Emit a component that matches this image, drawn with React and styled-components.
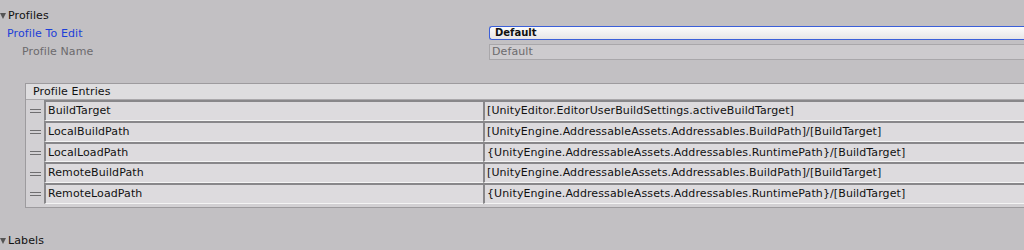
import React from 'react';
import styled, { createGlobalStyle } from 'styled-components';

const GlobalStyle = createGlobalStyle`
  html, body {
    margin: 0;
    padding: 0;
    background: #c2c0c3;
  }
  body {
    font-family: "DejaVu Sans", "Liberation Sans", sans-serif;
    font-size: 11px;
    letter-spacing: 0.1px;
    color: #111;
    overflow: hidden;
  }
`;

const Page = styled.div`
  width: 1024px;
  height: 250px;
  padding-top: 7px;
  box-sizing: border-box;
  overflow: hidden;
`;

const Foldout = styled.div`
  display: flex;
  align-items: center;
  height: 17px;
  gap: 2px;
  margin-top: ${(p) => p.$top || 0}px;
`;

const Arrow = styled.span`
  width: 0;
  height: 0;
  border-left: 3px solid transparent;
  border-right: 3px solid transparent;
  border-top: 6px solid #555;
  margin-top: 1px;
`;

const PropRow = styled.div`
  display: flex;
  align-items: center;
  height: ${(p) => p.$h}px;
  padding-left: ${(p) => p.$indent}px;
`;

const Label = styled.div`
  width: ${(p) => 489 - p.$indent}px;
  flex-shrink: 0;
  color: ${(p) => (p.$focused ? '#1d3fd8' : p.$disabled ? '#6c6a6d' : '#111')};
`;

const Dropdown = styled.div`
  flex: 1;
  height: 12px;
  line-height: 12px;
  padding-left: 5px;
  border: 1px solid #3b5fd9;
  border-right: none;
  border-radius: 3px 0 0 3px;
  background: linear-gradient(#fbfbfb, #e6e5e7);
  font-weight: bold;
  font-size: 10px;
  letter-spacing: 0;
  color: #111;
`;

const TextField = styled.div`
  flex: 1;
  height: 14px;
  line-height: 14px;
  padding-left: 2px;
  border: 1px solid #a9a7aa;
  border-right: none;
  background: #cdcbce;
  color: #6c6a6d;
`;

const ListBox = styled.div`
  margin: 22px 0 0 25px;
  border: 1px solid #9d9b9e;
  border-right: none;
  background: #d2d0d3;
  padding-bottom: 3px;
`;

const ListHeader = styled.div`
  height: 15px;
  line-height: 15px;
  padding-left: 7px;
  background: #dedddf;
  border-bottom: 1px solid #aaa8ab;
`;

const EntryRow = styled.div`
  display: flex;
  height: 20.75px;
`;

const Handle = styled.div`
  width: 18px;
  flex-shrink: 0;
  display: flex;
  flex-direction: column;
  justify-content: center;
  align-items: center;
  gap: 2px;
  padding-top: 2px;
  box-sizing: border-box;

  &::before,
  &::after {
    content: '';
    width: 11px;
    height: 1px;
    background: #6f6e70;
  }
`;

const Cell = styled.div`
  width: ${(p) => (p.$w ? `${p.$w}px` : 'auto')};
  flex: ${(p) => (p.$w ? '0 0 auto' : '1')};
  box-sizing: border-box;
  border-top: 2px solid #88878a;
  border-left: 2px solid #88878a;
  border-bottom: 1px solid #f4f4f4;
  background: #dddbde;
  padding: 1px 0 0 2px;
  line-height: 15px;
  white-space: nowrap;
  overflow: hidden;
`;

const entries = [
  ['BuildTarget', '[UnityEditor.EditorUserBuildSettings.activeBuildTarget]'],
  ['LocalBuildPath', '[UnityEngine.AddressableAssets.Addressables.BuildPath]/[BuildTarget]'],
  ['LocalLoadPath', '{UnityEngine.AddressableAssets.Addressables.RuntimePath}/[BuildTarget]'],
  ['RemoteBuildPath', '[UnityEngine.AddressableAssets.Addressables.BuildPath]/[BuildTarget]'],
  ['RemoteLoadPath', '{UnityEngine.AddressableAssets.Addressables.RuntimePath}/[BuildTarget]'],
];

function App() {
  return (
    <Page>
      <GlobalStyle />
      <Foldout>
        <Arrow />
        <span>Profiles</span>
      </Foldout>
      <PropRow $indent={7} $h={18}>
        <Label $indent={7} $focused>Profile To Edit</Label>
        <Dropdown>Default</Dropdown>
      </PropRow>
      <PropRow $indent={22} $h={19}>
        <Label $indent={22} $disabled>Profile Name</Label>
        <TextField>Default</TextField>
      </PropRow>
      <ListBox>
        <ListHeader>Profile Entries</ListHeader>
        {entries.map(([name, value]) => (
          <EntryRow key={name}>
            <Handle />
            <Cell $w={439}>{name}</Cell>
            <Cell>{value}</Cell>
          </EntryRow>
        ))}
      </ListBox>
      <Foldout $top={24}>
        <Arrow />
        <span>Labels</span>
      </Foldout>
    </Page>
  );
}

export default App;
